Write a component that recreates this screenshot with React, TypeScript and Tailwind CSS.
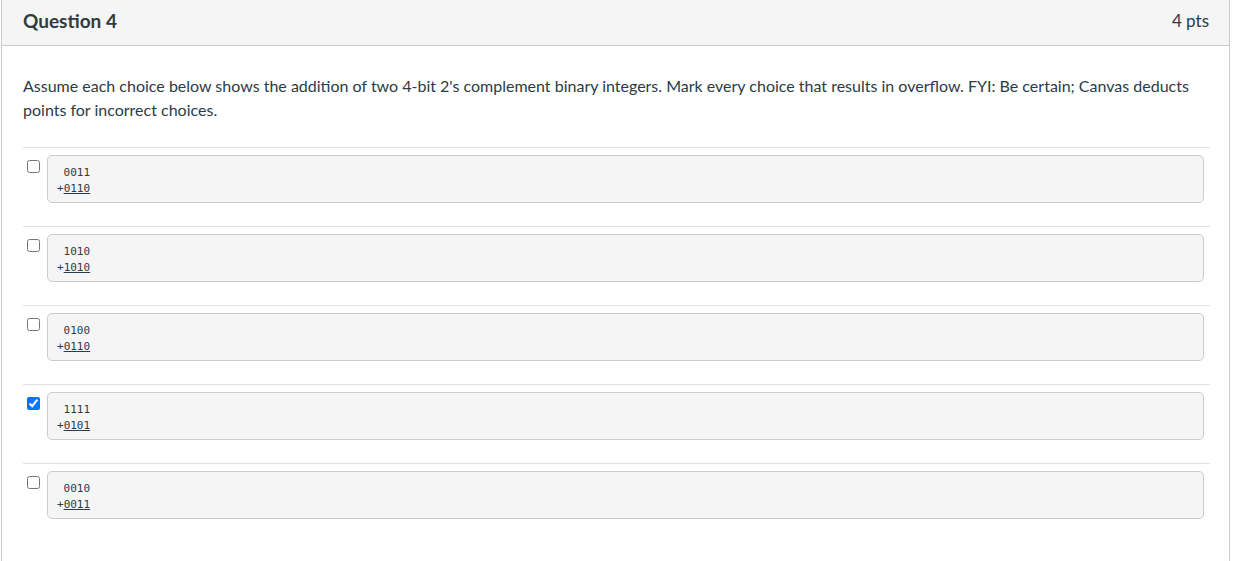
const choices = [
    { a: ' 0011', b: '0110', checked: false },
    { a: ' 1010', b: '1010', checked: false },
    { a: ' 0100', b: '0110', checked: false },
    { a: ' 1111', b: '0101', checked: true },
    { a: ' 0010', b: '0011', checked: false },
];

export default function App() {
    return (
        <div className="bg-white h-[561px] overflow-hidden" style={{ fontFamily: 'Lato, "Open Sans", sans-serif' }}>
            <div className="ml-[1px] w-[1229px] h-[600px] border border-t-0 border-[#c7cdd1] text-[#2d3b45]">
                <div className="h-[46px] bg-[#f5f5f5] border-b border-[#c7cdd1] flex items-center justify-between pl-[21px] pr-[20px]">
                    <h2 className="text-[19px] font-bold leading-none pb-[4px]">Question 4</h2>
                    <span className="text-[17px] leading-none pb-[4px]">4 pts</span>
                </div>
                <div className="px-[21px] pt-[28px]">
                    <p className="text-[16px] leading-[24px] pr-[10px]">
                        Assume each choice below shows the addition of two 4-bit 2's complement binary integers. Mark every choice that results in overflow. FYI: Be certain; Canvas deducts points for incorrect choices.
                    </p>
                    <div className="mt-[25px] w-[1187px]">
                        {choices.map((c, i) => (
                            <div key={i} className="border-t border-[#dfe2e4] pt-[7px] pb-[23px] flex items-start">
                                <input
                                    type="checkbox"
                                    defaultChecked={c.checked}
                                    className="w-[13px] h-[13px] ml-[4px] mt-[5px] m-0 shrink-0"
                                />
                                <div className="ml-[7px] w-[1157px] h-[48px] bg-[#f5f5f5] border border-[#c7cdd1] rounded-[5px] pl-[9px] pt-[9px]">
                                    <pre className="text-[11px] leading-[16px] text-[#2d3b45]" style={{ fontFamily: '"DejaVu Sans Mono", monospace' }}>
                                        {c.a}
                                        {'\n'}+<u>{c.b}</u>
                                    </pre>
                                </div>
                            </div>
                        ))}
                    </div>
                </div>
            </div>
        </div>
    );
}
